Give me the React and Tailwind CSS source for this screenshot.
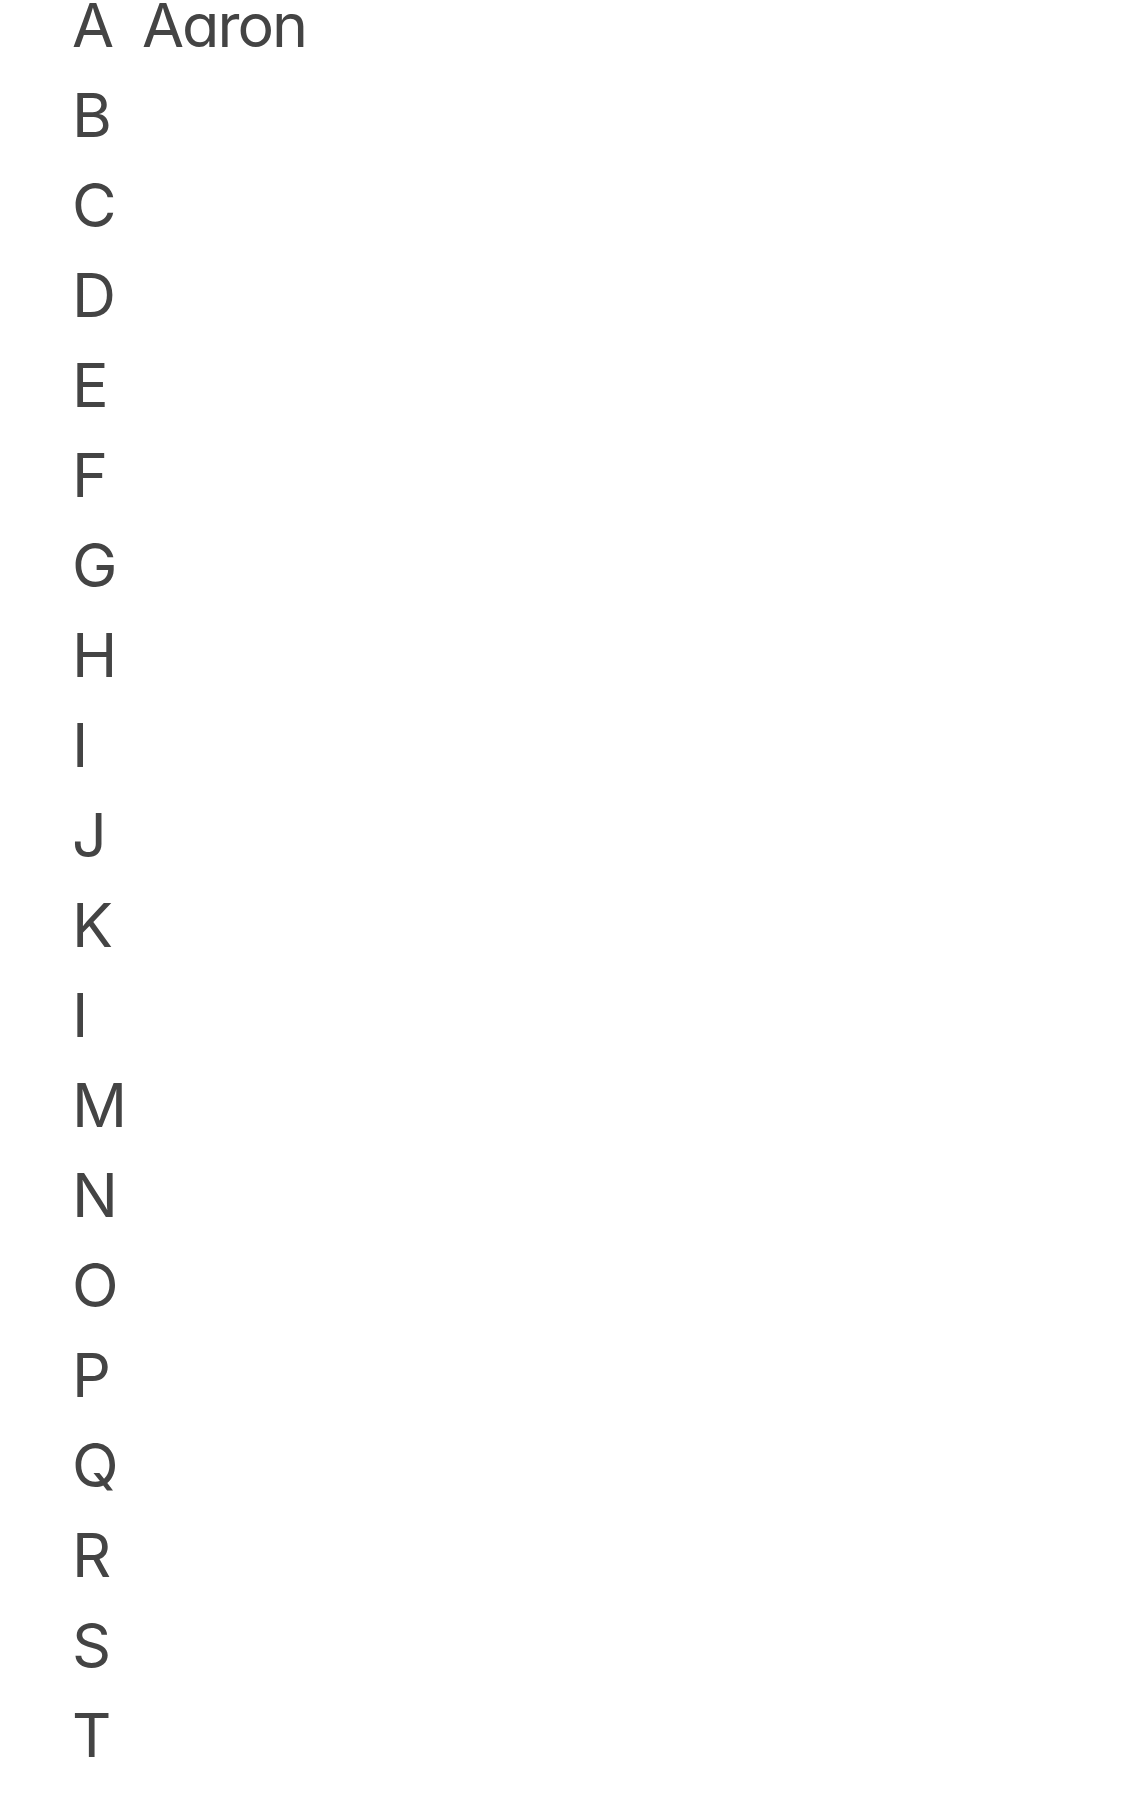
import React from 'react';

const letters = 'ABCDEFGHIJKIMNOPQRSTUVWXYZ'.split('');

// nombres agrupados por letra
const contacts = {
  A: ['Aaron'],
};

export default function App() {
  return (
    <div className="h-screen overflow-hidden bg-white">
      <div
        className="-mt-[20px] pl-[72px] text-[#444444] [font-feature-settings:'cv11']"
        style={{ fontFamily: 'Inter, "Noto Sans", sans-serif' }}
      >
        {letters.map((letter, i) => (
          <div key={letter + i} className="flex h-[90px] items-center text-[61px] leading-[90px]">
            <span className="w-[70px] shrink-0">{letter}</span>
            {(contacts[letter] || []).map(name => (
              <span key={name} className="tracking-[-2px]">{name}</span>
            ))}
          </div>
        ))}
      </div>
    </div>
  );
}
